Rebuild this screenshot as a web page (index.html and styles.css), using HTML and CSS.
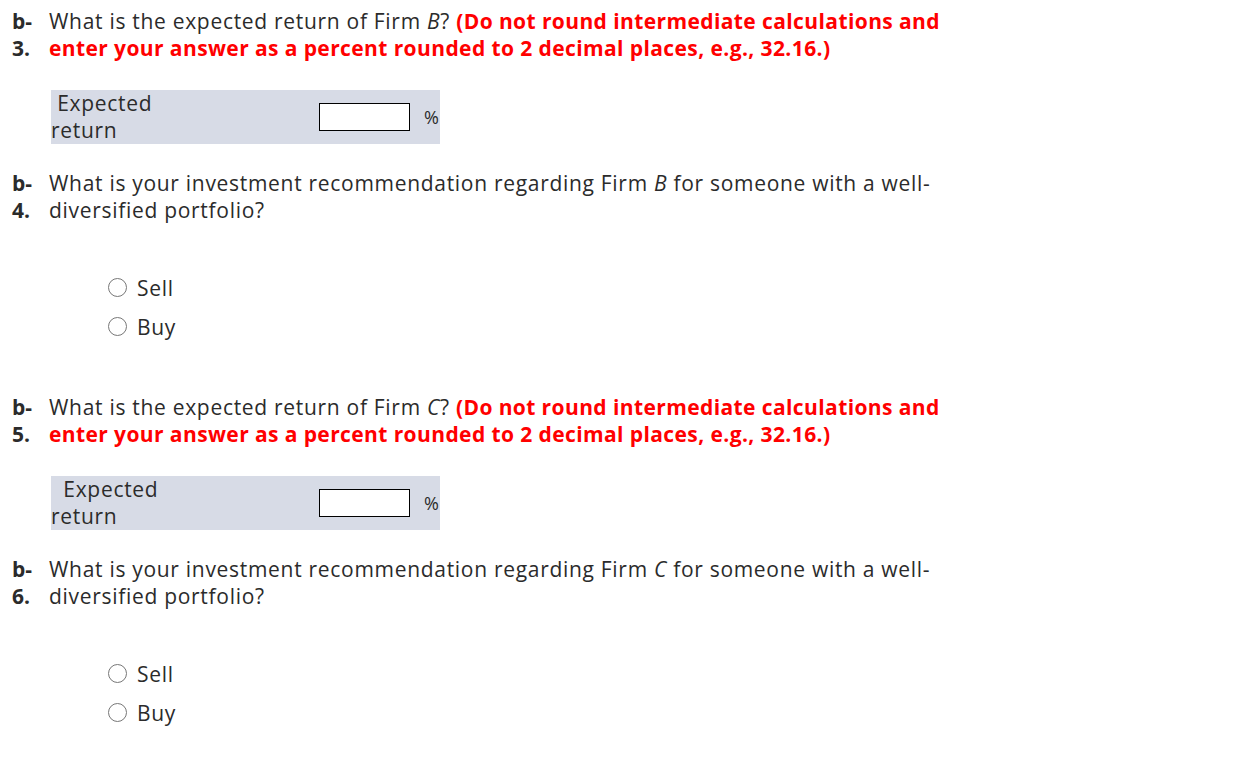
FILE: index.html
```html
<!DOCTYPE html>
<html>
<head>
<meta charset="utf-8">
<link rel="stylesheet" href="styles.css">
</head>
<body>
<div class="page">
  <div class="q">
    <div class="qnum">b-<br>3.</div>
    <div class="qtext">What is the expected return of Firm <i>B</i>? <span class="red">(Do not round intermediate calculations and enter your answer as a percent rounded to 2 decimal places, e.g., 32.16.)</span></div>
  </div>
  <div class="answer">
    <div class="alabel"><span class="first">&nbsp;Expected</span><br>return</div>
    <div class="ainput"><span class="box"></span><span class="pct">%</span></div>
  </div>

  <div class="q q2">
    <div class="qnum">b-<br>4.</div>
    <div class="qtext">What is your investment recommendation regarding Firm <i>B</i> for someone with a well-diversified portfolio?</div>
  </div>
  <div class="radios">
    <div class="opt"><span class="radio"></span>Sell</div>
    <div class="opt"><span class="radio"></span>Buy</div>
  </div>

  <div class="q q3">
    <div class="qnum">b-<br>5.</div>
    <div class="qtext">What is the expected return of Firm <i>C</i>? <span class="red">(Do not round intermediate calculations and enter your answer as a percent rounded to 2 decimal places, e.g., 32.16.)</span></div>
  </div>
  <div class="answer">
    <div class="alabel"><span class="first">&nbsp;&nbsp;Expected</span><br>return</div>
    <div class="ainput"><span class="box"></span><span class="pct">%</span></div>
  </div>

  <div class="q q4">
    <div class="qnum">b-<br>6.</div>
    <div class="qtext">What is your investment recommendation regarding Firm <i>C</i> for someone with a well-diversified portfolio?</div>
  </div>
  <div class="radios">
    <div class="opt"><span class="radio"></span>Sell</div>
    <div class="opt"><span class="radio"></span>Buy</div>
  </div>
</div>
</body>
</html>
```
FILE: styles.css
```css
html, body { margin: 0; padding: 0; background: #fff; }
body {
  font-family: "Open Sans", "Liberation Sans", sans-serif;
  font-size: 21px;
  letter-spacing: 0.7px;
  color: #2b2b2b;
}
.page { padding: 8px 0 0 12px; width: 940px; }
.q { display: flex; line-height: 27px; }
.qnum { width: 37px; flex: none; font-weight: 700; letter-spacing: 0; }
.qtext { width: 896px; flex: none; }
.red { color: #f00; font-weight: 700; letter-spacing: 0.4px; }
.answer {
  margin: 28px 0 0 39px;
  width: 389px;
  height: 54px;
  background: #d7dbe6;
  display: flex;
  align-items: center;
}
.alabel { width: 268px; line-height: 27px; }
.ainput { display: flex; align-items: center; }
.box { width: 89px; height: 26px; border: 1px solid #000; background: #fff; display: inline-block; }
.pct { margin-left: 14px; font-size: 18px; }
.q2 { margin-top: 26px; }
.radios { margin: 44px 0 0 96px; }
.opt { display: flex; align-items: center; height: 39px; line-height: 24px; }
.radio {
  width: 17px; height: 17px; border: 1.3px solid #777; border-radius: 50%;
  margin-right: 10px; display: inline-block; background: #fff; flex: none;
}
.q3 { margin-top: 48px; }
.q4 { margin-top: 26px; }
```
